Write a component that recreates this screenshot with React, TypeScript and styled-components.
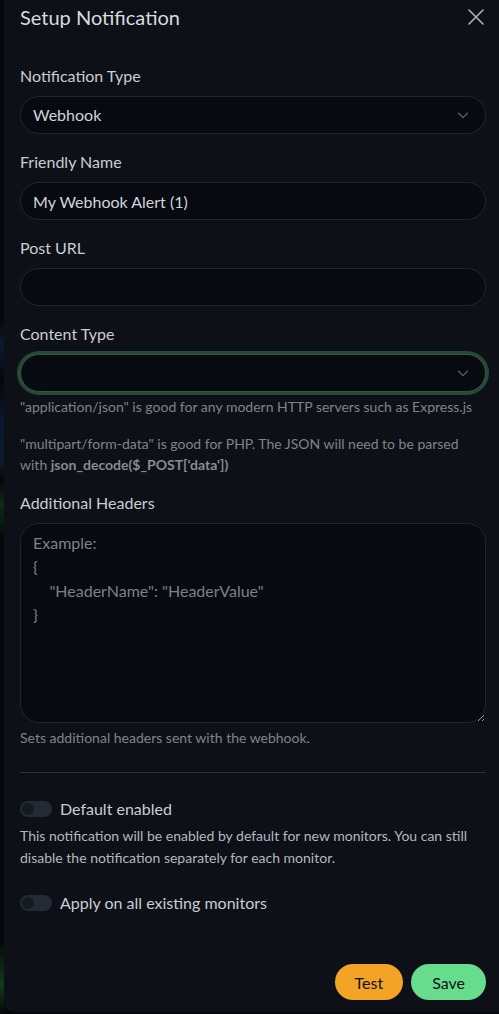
import { useState } from "react";
import styled, { createGlobalStyle } from "styled-components";

const GlobalStyle = createGlobalStyle`
  html, body {
    margin: 0;
    padding: 0;
    background: #05070a;
    height: 100%;
    overflow: hidden;
  }
  * {
    box-sizing: border-box;
  }
`;

const Page = styled.div`
  display: flex;
  height: 1014px;
  font-family: Lato, "Noto Sans", sans-serif;
`;

const Backdrop = styled.div`
  width: 4px;
  flex-shrink: 0;
  background: linear-gradient(
    180deg,
    #05070a 0px,
    #06080c 320px,
    #0d1a33 345px,
    #05070a 380px,
    #0c1630 420px,
    #0d1a33 460px,
    #05070a 480px,
    #0f2a17 505px,
    #05070a 540px,
    #05070a 940px,
    #123a1e 985px,
    #05070a 1014px
  );
`;

const Modal = styled.div`
  flex: 1;
  background: #0d1117;
  border-bottom-left-radius: 10px;
  display: flex;
  flex-direction: column;
  height: 1012px;
  color: #c7cbd0;
`;

const Header = styled.div`
  display: flex;
  align-items: center;
  justify-content: space-between;
  padding: 2px 13px 0 16px;
`;

const Title = styled.h5`
  margin: 0;
  font-size: 20px;
  font-weight: 400;
  line-height: 30px;
  color: #d8dbdf;
`;

const CloseButton = styled.button`
  width: 26px;
  height: 26px;
  padding: 0;
  border: none;
  background: transparent;
  color: #aeb3b9;
  display: flex;
  align-items: center;
  justify-content: center;
  margin-right: -3px;
  cursor: pointer;
`;

const Body = styled.div`
  padding: 32px 13px 0 16px;
  display: flex;
  flex-direction: column;
`;

const Field = styled.div<{ $mb?: number }>`
  margin-bottom: ${(p) => (p.$mb ?? 16)}px;
`;

const Label = styled.label`
  display: block;
  font-size: 16px;
  line-height: 24px;
  margin-bottom: 8px;
  color: #c9cdd2;
`;

const Input = styled.input`
  display: block;
  width: 100%;
  height: 38px;
  padding: 6px 12px;
  font-family: inherit;
  font-size: 16px;
  color: #d0d4d9;
  background: #070a10;
  border: 1px solid #1d2634;
  border-radius: 19px;
  outline: none;
`;

const SelectBox = styled.div<{ $focus?: boolean }>`
  position: relative;
  height: 38px;
  padding: 6px 12px;
  font-size: 16px;
  line-height: 24px;
  color: #d0d4d9;
  background: #070a10;
  border: 1px solid ${(p) => (p.$focus ? "#2f5a3f" : "#1d2634")};
  border-radius: 19px;
  box-shadow: ${(p) => (p.$focus ? "0 0 0 3px rgba(70, 140, 95, 0.45)" : "none")};
  display: flex;
  align-items: center;
  justify-content: space-between;
`;

const Chevron = styled.svg`
  width: 14px;
  height: 14px;
  margin-right: 3px;
  color: #59616c;
`;

const HelpText = styled.div`
  margin-top: 4px;
  font-size: 14px;
  line-height: 21px;
  color: #7d848c;
  p {
    margin: 0 0 16px;
  }
  strong {
    font-weight: 700;
    color: #858c94;
  }
`;

const TextArea = styled.textarea`
  display: block;
  width: 100%;
  height: 200px;
  padding: 7px 12px;
  font-family: inherit;
  font-size: 16px;
  line-height: 24px;
  color: #d0d4d9;
  background: #070a10;
  border: 1px solid #1d2634;
  border-radius: 19px;
  resize: vertical;
  outline: none;
  &::placeholder {
    color: #7b8189;
  }
`;

const Divider = styled.hr`
  margin: 24px 0 24px;
  border: none;
  border-top: 1px solid #2a3039;
`;

const SwitchRow = styled.label`
  display: flex;
  align-items: center;
  gap: 8px;
  font-size: 16px;
  line-height: 24px;
  color: #c9cdd2;
`;

const Switch = styled.span<{ $on?: boolean }>`
  position: relative;
  width: 32px;
  height: 16px;
  border-radius: 8px;
  background: ${(p) => (p.$on ? "#5cdd8b" : "#232a35")};
  flex-shrink: 0;
  &::after {
    content: "";
    position: absolute;
    top: 2px;
    left: ${(p) => (p.$on ? "18px" : "2px")};
    width: 12px;
    height: 12px;
    border-radius: 50%;
    background: #151a22;
  }
`;

const SwitchHelp = styled.div`
  margin-top: 4px;
  font-size: 14px;
  line-height: 22px;
  color: #b3b8be;
`;

const Footer = styled.div`
  margin-top: auto;
  display: flex;
  justify-content: flex-end;
  gap: 8px;
  padding: 0 13px 12px 16px;
`;

const Button = styled.button<{ $variant: "warning" | "primary" }>`
  height: 36px;
  padding: 0 ${(p) => (p.$variant === "warning" ? 20 : 21)}px;
  font-family: inherit;
  font-size: 16px;
  color: #0d1117;
  border: none;
  border-radius: 18px;
  background: ${(p) => (p.$variant === "warning" ? "#f3a325" : "#68dc8d")};
  cursor: pointer;
`;

function App() {
  const [name, setName] = useState("My Webhook Alert (1)");
  const [url, setUrl] = useState("");
  const [headers, setHeaders] = useState("");
  const [defaultEnabled, setDefaultEnabled] = useState(false);
  const [applyExisting, setApplyExisting] = useState(false);

  return (
    <>
      <GlobalStyle />
      <Page>
        <Backdrop />
        <Modal>
          <Header>
            <Title>Setup Notification</Title>
            <CloseButton aria-label="Close">
              <svg width="18" height="18" viewBox="0 0 18 18" fill="none" stroke="currentColor" strokeWidth="1.6" strokeLinecap="round">
                <path d="M2 2 L16 16 M16 2 L2 16" />
              </svg>
            </CloseButton>
          </Header>
          <Body>
            <Field>
              <Label>Notification Type</Label>
              <SelectBox>
                <span>Webhook</span>
                <Chevron viewBox="0 0 16 16" fill="none" stroke="currentColor" strokeWidth="1.6" strokeLinecap="round" strokeLinejoin="round">
                  <path d="M3 6 L8 11 L13 6" />
                </Chevron>
              </SelectBox>
            </Field>
            <Field>
              <Label>Friendly Name</Label>
              <Input value={name} onChange={(e) => setName(e.target.value)} />
            </Field>
            <Field>
              <Label>Post URL</Label>
              <Input value={url} onChange={(e) => setUrl(e.target.value)} />
            </Field>
            <Field $mb={0}>
              <Label>Content Type</Label>
              <SelectBox $focus>
                <span />
                <Chevron viewBox="0 0 16 16" fill="none" stroke="currentColor" strokeWidth="1.6" strokeLinecap="round" strokeLinejoin="round">
                  <path d="M3 6 L8 11 L13 6" />
                </Chevron>
              </SelectBox>
              <HelpText>
                <p>"application/json" is good for any modern HTTP servers such as Express.js</p>
                <p>
                  "multipart/form-data" is good for PHP. The JSON will need to be parsed with{" "}
                  <strong>json_decode($_POST['data'])</strong>
                </p>
              </HelpText>
            </Field>
            <Field $mb={0}>
              <Label>Additional Headers</Label>
              <TextArea
                value={headers}
                onChange={(e) => setHeaders(e.target.value)}
                placeholder={'Example:\n{\n    "HeaderName": "HeaderValue"\n}'}
              />
              <HelpText>Sets additional headers sent with the webhook.</HelpText>
            </Field>
            <Divider />
            <SwitchRow onClick={() => setDefaultEnabled(!defaultEnabled)}>
              <Switch $on={defaultEnabled} />
              Default enabled
            </SwitchRow>
            <SwitchHelp>
              This notification will be enabled by default for new monitors. You can still disable the notification separately for each monitor.
            </SwitchHelp>
            <Field $mb={0} style={{ marginTop: 22 }}>
              <SwitchRow onClick={() => setApplyExisting(!applyExisting)}>
                <Switch $on={applyExisting} />
                Apply on all existing monitors
              </SwitchRow>
            </Field>
          </Body>
          <Footer>
            <Button $variant="warning">Test</Button>
            <Button $variant="primary">Save</Button>
          </Footer>
        </Modal>
      </Page>
    </>
  );
}

export default App;
